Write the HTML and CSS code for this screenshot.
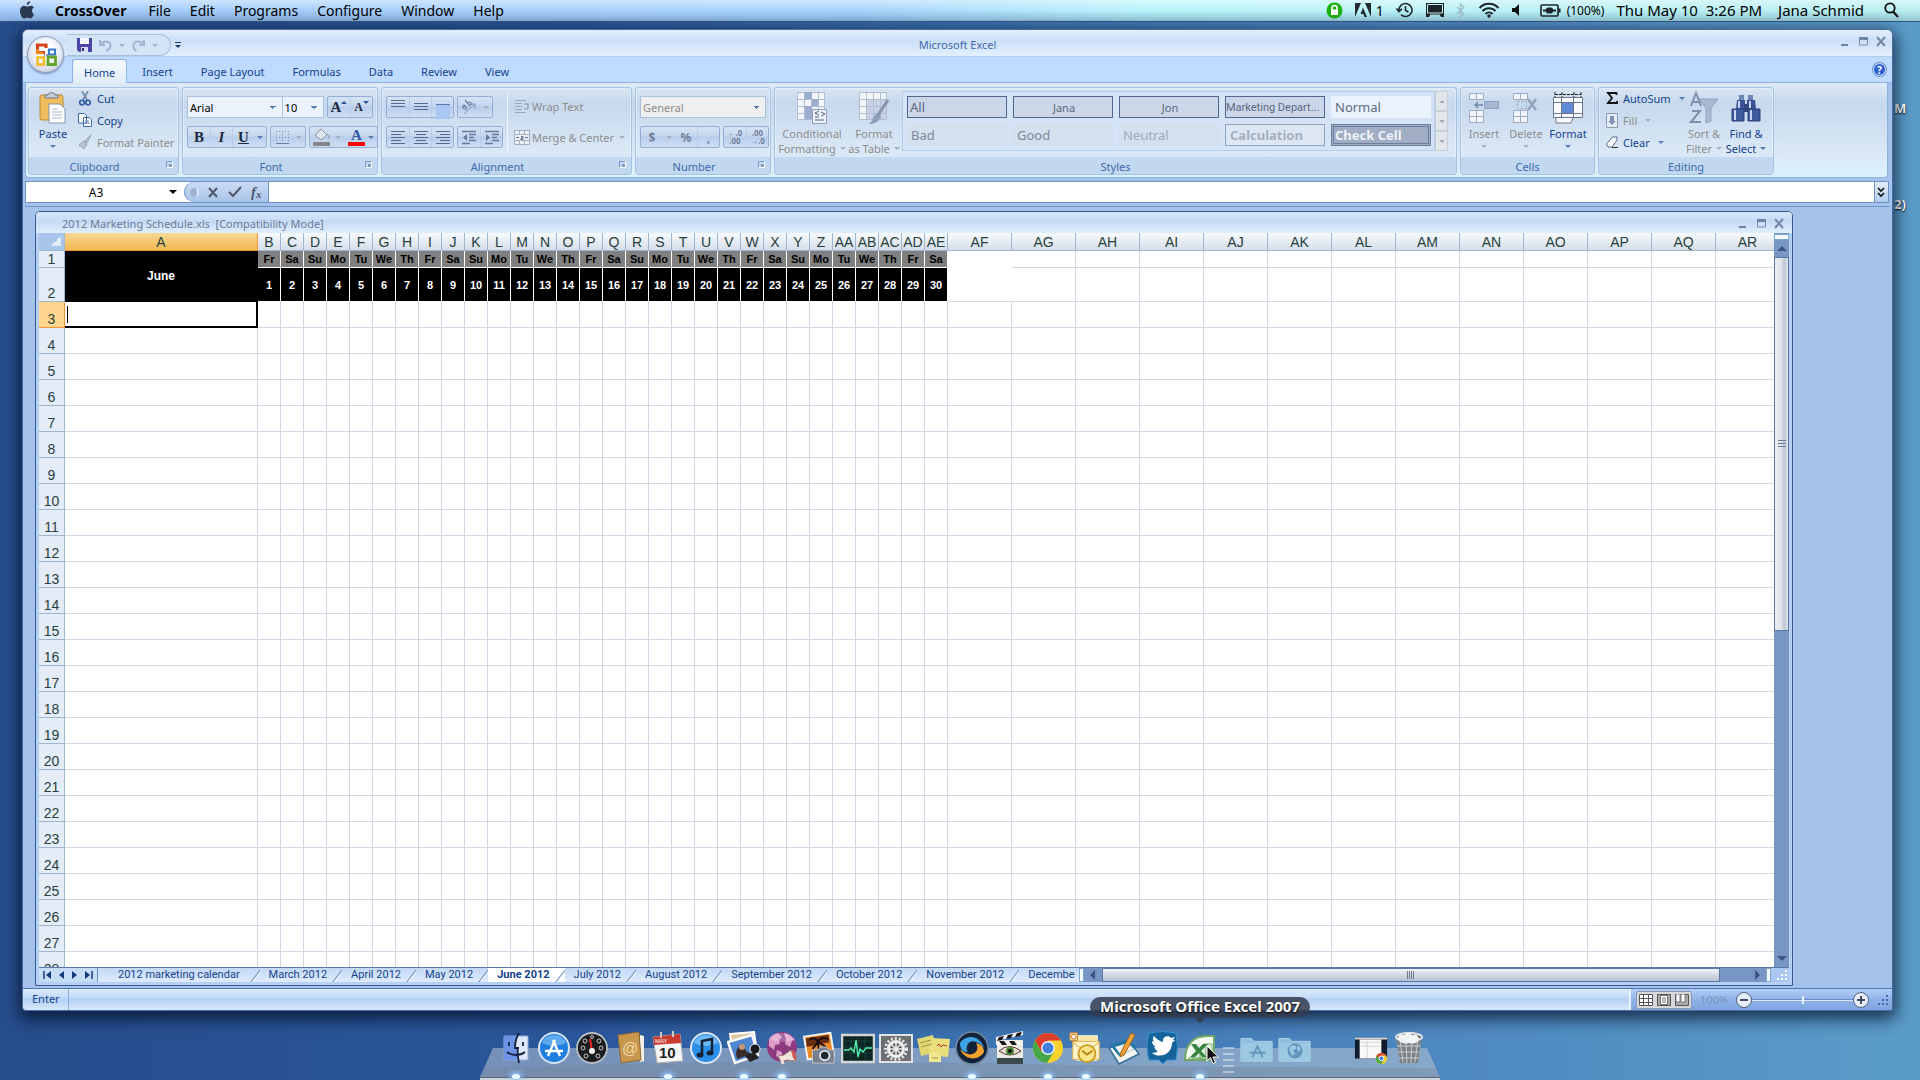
FILE: index.html
```html
<!doctype html>
<html lang="en">
<head>
    <meta charset="UTF-8">
    <title>Microsoft Excel</title>
    <link rel="stylesheet" href="styles.css">
</head>
<body>
    <header class="menubar">
        <svg class="apple" width="16" height="18" viewBox="0 0 16 18"><path d="M11 0c.2 2-1.400 3.900-3.300 4C7.500 2.300 9.200.3 11 0zM14.900 13.200C14 15.700 12.700 17.500 11.300 17.500c-1.100 0-1.500-.7-2.900-.7s-1.900.7-2.900.7C3.300 17.500 1 13.600 1 10.200 1 6.900 3 4.800 5.200 4.800c1.300 0 2.200.8 3.200.8.900 0 2-.9 3.600-.9 1.100 0 2.200.6 2.900 1.600-2.700 1.700-2.300 5.700 0 6.900z" fill="#2b3950"/></svg>
        <nav class="menus">
            <button class="app-name">CrossOver</button>
            <button>File</button>
            <button>Edit</button>
            <button>Programs</button>
            <button>Configure</button>
            <button>Window</button>
            <button>Help</button>
        </nav>
        <div class="extras">
            <svg width="17" height="17" viewBox="0 0 17 17"><circle cx="8.500" cy="8.500" r="8" fill="#1eb010"/><path d="M6 8V6a2.500 2.500 0 0 1 5 0v2" fill="none" stroke="#fff" stroke-width="1.500"/><rect x="5" y="7.500" width="7" height="5.500" fill="#fff"/></svg>
            <span class="adobe"><svg width="16" height="14" viewBox="0 0 16 14"><path d="M0 0h6L0 14zM16 0h-6l6 14zM8 4.500l4 9.500H9.500l-1.200-3H5.500z" fill="#222c30"/></svg>1</span>
            <svg width="18" height="16" viewBox="0 0 18 16"><path d="M3 8a6.500 6.500 0 1 1 2 4.700M.5 6.500L3 9.500l3-2.700M9.500 4v4.500l3 1.500" fill="none" stroke="#1c2529" stroke-width="1.600"/></svg>
            <svg width="18" height="15" viewBox="0 0 18 15"><path d="M0 0h18v14h-3l-1.500-2.500h-9L3 14H0z" fill="#1c2529"/><path d="M1.500 1.500h15v8.500h-15z" fill="#1c2529" stroke="#cdeef2"/></svg>
            <svg width="10" height="15" viewBox="0 0 10 15"><path d="M1 4l7 7-3.500 3V1L8 4l-7 7" fill="none" stroke="#9dbcc5" stroke-width="1.200"/></svg>
            <svg width="22" height="16" viewBox="0 0 22 16"><path d="M1.500 6a13 13 0 0 1 19 0M4.500 9a9 9 0 0 1 13 0M7.500 12a5 5 0 0 1 7 0" fill="none" stroke="#1c2529" stroke-width="2"/><circle cx="11" cy="14" r="1.700" fill="#1c2529"/></svg>
            <svg width="8" height="12" viewBox="0 0 8 12"><path d="M0 4h3l4-4v12L3 8H0z" fill="#111"/></svg>
            <span class="battery"><svg width="22" height="13" viewBox="0 0 22 13"><rect x="1" y="1" width="17" height="11" rx="1" fill="none" stroke="#1c2529" stroke-width="1.600"/><path d="M19.500 4.500v4M3 6.500h4M12 6.500h4" stroke="#1c2529" stroke-width="2"/><rect x="6" y="3.500" width="7" height="6" rx="2" fill="#1c2529"/></svg>(100%)</span>
            <span class="clock">Thu May 10&nbsp; 3:26 PM</span>
            <span class="user">Jana Schmid</span>
            <svg class="search" width="15" height="16" viewBox="0 0 15 16"><circle cx="6" cy="6" r="4.700" fill="none" stroke="#111" stroke-width="1.800"/><path d="M9.500 10l4.500 5" stroke="#111" stroke-width="2.200"/></svg>
        </div>
    </header>

    <main class="desktop">
        <div class="file-label first">M</div>
        <div class="file-label second">2)</div>

        <section class="window">
            <div class="titlebar">
                <button class="office" aria-label="Office Button">
                    <svg width="24" height="26" viewBox="0 0 24 26" fill="none"><path d="M11 10.500H3.500V3H12v3" stroke="#d7431b" stroke-width="3.200"/><path d="M9 11H3.500V7" stroke="#f08a24" stroke-width="2.600"/><path d="M15 7.500h6v5h-6z" stroke="#3b7cc9" stroke-width="2.200"/><path d="M3.500 15.500H10v7H3.500z" stroke="#f2b921" stroke-width="2.400"/><path d="M14 22.500h7.500V15H14z" stroke="#63a52e" stroke-width="2.800"/><path d="M12 12h2v2h-2zM10 12h1v3h-1z" fill="#8a93a8"/></svg>
                </button>
                <div class="qat">
                    <button aria-label="Save"><svg width="15" height="14" viewBox="0 0 15 14"><path d="M0 0h15v14H2l-2-2z" fill="#4b46a8"/><path d="M3 0h9v6H3z" fill="#f3f6ff"/><path d="M4 9h7v5H4z" fill="#d8dcf0"/><path d="M5 10h2v3H5z" fill="#2d2a80"/></svg></button>
                    <button class="off" aria-label="Undo"><svg width="13" height="13" viewBox="0 0 13 13"><path d="M1 1v5h5M1.500 5.500C5 1 11 2 11.500 6c.3 3-2.500 5-4.500 6" fill="none" stroke="#a3b6d2" stroke-width="2.200"/></svg></button>
                    <i class="arrow off"></i>
                    <button class="off" aria-label="Redo"><svg width="13" height="13" viewBox="0 0 13 13"><path d="M12 1v5H7M11.500 5.500C8 1 2 2 1.500 6c-.2 3 1 5 3 6" fill="none" stroke="#a3b6d2" stroke-width="2"/></svg></button>
                    <i class="arrow off"></i>
                </div>
                <button class="qat-more" aria-label="Customize"><i class="arrow"></i></button>
                <h1>Microsoft Excel</h1>
                <div class="controls">
                    <button aria-label="Minimize"><svg width="11" height="11"><path d="M1 9h7" stroke="#6d83a5" stroke-width="2"/></svg></button>
                    <button aria-label="Restore"><svg width="11" height="11"><path d="M1.500 2v7h8V2" fill="none" stroke="#7b8fae"/><path d="M1 2.500h9" stroke="#6d83a5" stroke-width="3"/></svg></button>
                    <button aria-label="Close"><svg width="11" height="11"><path d="M1 1l8 9M9 1l-8 9" stroke="#7488a8" stroke-width="2"/></svg></button>
                </div>
            </div>

            <nav class="ribbon-tabs">
                <button class="active">Home</button>
                <button>Insert</button>
                <button>Page Layout</button>
                <button>Formulas</button>
                <button>Data</button>
                <button>Review</button>
                <button>View</button>
                <button class="help" aria-label="Help">?</button>
            </nav>

            <div class="ribbon">
                <section class="group clipboard">
                    <div class="body">
                        <button class="big">
                            <svg width="28" height="32" viewBox="0 0 28 32"><rect x="1" y="3" width="23" height="25" rx="2" fill="#efbd5c" stroke="#bd8b35"/><path d="M6 6V3h3c0-3 7-3 7 0h3v3z" fill="#c6ccd6" stroke="#71788a"/><path d="M10 12h11l5 5v14H10z" fill="#fff" stroke="#8694ae"/><path d="M13 17h6M13 20h10M13 23h10M13 26h10" stroke="#a9b6cc"/></svg>
                            <span>Paste</span><i class="arrow"></i>
                        </button>
                        <div class="stack">
                            <button class="cut"><svg width="14" height="15" viewBox="0 0 14 15"><path d="M4 0l5 9M10 0L5 9" stroke="#7286a8" stroke-width="1.600"/><circle cx="4" cy="11.500" r="2.300" fill="none" stroke="#2f5aa5" stroke-width="1.600"/><circle cx="10" cy="11.500" r="2.300" fill="none" stroke="#2f5aa5" stroke-width="1.600"/></svg>Cut</button>
                            <button><svg width="14" height="14" viewBox="0 0 14 14"><path d="M.5.500h6l2 2V10h-8zM5.500 4.500h6l2 2v7h-8z" fill="#fff" stroke="#3c68ad"/><path d="M7 8h4M7 10h5" stroke="#5d83c0"/></svg>Copy</button>
                            <button class="off"><svg width="14" height="14" viewBox="0 0 14 14"><path d="M13 0L7 6l2 2zM6 6l3 3-3 5-5-4z" fill="#b7c2d2" stroke="#98a6ba"/></svg>Format Painter</button>
                        </div>
                    </div>
                    <h2 class="launcher">Clipboard<i class="launch"></i></h2>
                </section>

                <section class="group font">
                    <div class="body rows">
                        <div class="row">
                            <select class="combo face" aria-label="Font"><option>Arial</option></select>
                            <select class="combo size" aria-label="Font size"><option>10</option></select>
                            <div class="cluster last"><button class="serif">A<svg width="6" height="12"><path d="M0 3l3-3 3 3z" fill="#2d5596"/></svg></button><button class="serif small">A<svg width="6" height="12"><path d="M0 0h6L3 3z" fill="#2d5596"/></svg></button></div>
                        </div>
                        <div class="row">
                            <div class="cluster"><button class="serif">B</button><button class="serif italic">I</button><button class="serif under">U</button><i class="arrow"></i></div>
                            <div class="cluster off"><button aria-label="Borders"><svg width="15" height="15"><path d="M1.500 1v12M7.500 1v12M13.500 1v12M1 1.500h13M1 7.500h13" stroke="#7f8ea8" stroke-dasharray="1 2"/><path d="M1 13.500h13" stroke="#6d7c96"/></svg></button><i class="arrow"></i></div>
                            <div class="cluster last"><button aria-label="Fill color"><svg width="17" height="18"><path d="M2 7l6-6 6 6-6 5z" fill="#dfe5ee" stroke="#8792a8"/><path d="M14 6c3 2 2 4 1 5" stroke="#8792a8" fill="none"/><path d="M0 14h17v4H0z" fill="#858585"/></svg></button><i class="arrow off"></i><button class="font-color">A</button><i class="arrow"></i></div>
                        </div>
                    </div>
                    <h2 class="launcher">Font<i class="launch"></i></h2>
                </section>

                <section class="group alignment">
                    <div class="body">
                        <div class="rows">
                            <div class="row">
                                <div class="cluster"><button aria-label="Top"><i class="lines top"></i></button><button aria-label="Middle"><i class="lines"></i></button><button aria-label="Bottom"><i class="lines bottom"></i></button></div>
                                <div class="cluster"><button aria-label="Orientation"><svg width="18" height="18"><path d="M4 16L15 6M15 11V6h-5" fill="none" stroke="#8090ad"/><path d="M2 9q2-3 3-1l2 2M5 8q-3 2-1 3t3-1M5 2l5 6M7 5q3-2 4 0t-2 3" fill="none" stroke="#7484a2" stroke-width="1.200"/></svg></button><i class="arrow off"></i></div>
                            </div>
                            <div class="row">
                                <div class="cluster"><button aria-label="Left"><i class="lines left"></i></button><button aria-label="Center"><i class="lines center"></i></button><button aria-label="Right"><i class="lines right"></i></button></div>
                                <div class="cluster"><button aria-label="Decrease indent"><svg width="16" height="15"><path d="M1 1.500h14M8 4.500h7M8 7.500h5M8 10.500h7M1 13.500h8" stroke="#65799d" stroke-width="1.500"/><path d="M6 4L2 7.500 6 11z" fill="#65799d"/></svg></button><button aria-label="Increase indent"><svg width="16" height="15"><path d="M1 1.500h14M8 4.500h7M8 7.500h5M8 10.500h7M1 13.500h8" stroke="#65799d" stroke-width="1.500"/><path d="M2 4l4 3.500L2 11z" fill="#65799d"/></svg></button></div>
                            </div>
                        </div>
                        <div class="stack wide">
                            <button class="off"><svg width="16" height="15"><path d="M1 1.500h11M1 4.500h7M1 7.500h7M1 10.500h7M1 13.500h11" stroke="#9aa8bf"/><path d="M10 5h4v5h-4" fill="none" stroke="#8393b0"/></svg>Wrap Text</button>
                            <button class="off"><svg width="16" height="15"><path d="M.5.500h15v14H.500zM.500 4.500h15M.500 10.500h15M5.500 0v4M10.500 0v4M5.500 11v4M10.500 11v4" fill="#edf1f7" stroke="#a3afc3"/><path d="M2 7.500h3M11 7.500h3M7 6.500h2v3H7v-1.500h2" fill="none" stroke="#65728c"/></svg>Merge &amp; Center<i class="arrow"></i></button>
                        </div>
                    </div>
                    <h2 class="launcher">Alignment<i class="launch off"></i></h2>
                </section>

                <section class="group number">
                    <div class="body rows">
                        <div class="row"><select class="combo format" disabled aria-label="Number format"><option>General</option></select></div>
                        <div class="row">
                            <div class="cluster"><button class="sign">$</button><i class="arrow off"></i><button class="sign">%</button><button class="sign">,</button></div>
                            <div class="cluster last"><button class="decimal">←.0<br>.00</button><button class="decimal">.00<br>→.0</button></div>
                        </div>
                    </div>
                    <h2 class="launcher">Number<i class="launch off"></i></h2>
                </section>

                <section class="group styles">
                    <div class="body">
                        <button class="big off conditional">
                            <svg width="32" height="34" viewBox="0 0 32 34"><path d="M1.500 1.500h27v27h-27zM1 8.500h27M1 15.500h27M1 22.500h27M8.500 1v27M15.500 1v27M22.500 1v27" fill="#f2f5fa" stroke="#b0bccf"/><path d="M9 1h7v7H9zM9 15h7v13H9zM16 8h6v7h-6z" fill="#9badcf"/><path d="M16.500 18.500h14v14h-14z" fill="#edf2fa" stroke="#8ea0bd"/><path d="M23 20l-4 2 4 2M19 26h4M25 21l4 2-4 2M19 29h9" fill="none" stroke="#51627f"/></svg>
                            <span>Conditional<br>Formatting<i class="arrow"></i></span>
                        </button>
                        <button class="big off table-style">
                            <svg width="32" height="34" viewBox="0 0 32 34"><path d="M1.500 1.500h27v27h-27zM1 8.500h27M1 15.500h27M1 22.500h27M8.500 1v27M15.500 1v27M22.500 1v27" fill="#f2f5fa" stroke="#b0bccf"/><path d="M9 9h19v19H9z" fill="#b5c2d8" opacity=".7"/><path d="M30 9L20 24" stroke="#8492aa" stroke-width="3"/><path d="M19 22l4 3c-2 6-6 8-12 8 4-3 4-8 8-11z" fill="#8d9db9"/></svg>
                            <span>Format<br>as Table<i class="arrow"></i></span>
                        </button>
                        <div class="gallery">
                            <button class="boxed big-text">All</button><button class="boxed mid">Jana</button><button class="boxed mid">Jon</button><button class="boxed tight">Marketing Depart...</button><button class="normal">Normal</button>
                            <button class="bad">Bad</button><button class="good">Good</button><button class="neutral">Neutral</button><button class="calc">Calculation</button><button class="check">Check Cell</button>
                        </div>
                        <div class="gallery-scroll"><button aria-label="Up"><i class="arrow up"></i></button><button aria-label="Down"><i class="arrow"></i></button><button aria-label="More"><i class="arrow more"></i></button></div>
                    </div>
                    <h2>Styles</h2>
                </section>

                <section class="group cells">
                    <div class="body">
                        <button class="big off"><svg width="32" height="32" viewBox="0 0 32 32"><path d="M1.500 1.500h14v6h-14zM8.500 1v6M1.500 18.500h14v12h-14zM8.500 18v12M1 24.500h14" fill="#f2f5fa" stroke="#9cabc3"/><path d="M16.500 9.500h14v7h-14z" fill="#a9b8d2" stroke="#8fa0bc"/><path d="M7 13h8M10 10l-3 3 3 3" stroke="#7687a5" fill="none" stroke-width="1.500"/></svg><span>Insert</span><i class="arrow"></i></button>
                        <button class="big off"><svg width="32" height="32" viewBox="0 0 32 32"><path d="M3.500 1.500h14v6h-14zM10.500 1v6M3.500 18.500h14v12h-14zM10.500 18v12M3 24.500h14" fill="#f2f5fa" stroke="#9cabc3"/><path d="M7.500 9.500h9v7h-9z" fill="none" stroke="#8fa0bc" stroke-dasharray="2"/><path d="M18 7l8 11M26 7l-8 11" stroke="#94a2bb" stroke-width="2.500"/></svg><span>Delete</span><i class="arrow"></i></button>
                        <button class="big"><svg width="32" height="34" viewBox="0 0 32 34"><path d="M3 3.500h26M3 1v5M29 1v5M10 1v5M22 1v5" stroke="#222" stroke-dasharray="3 1"/><path d="M1.500 6.500h29v20h-29zM1 11.500h29M1 22.500h29M9.500 6v20M21.500 6v20M4 27v5h15l2-5" fill="#f8faff" stroke="#6e7685"/><path d="M10 12h11v10H10z" fill="#5e8ad8"/></svg><span>Format</span><i class="arrow"></i></button>
                    </div>
                    <h2>Cells</h2>
                </section>

                <section class="group editing">
                    <div class="body">
                        <div class="stack">
                            <button><svg width="12" height="12" viewBox="0 0 12 12"><path d="M10.500 3V1H2l4 5-4 5h9V9" fill="none" stroke="#111" stroke-width="1.800"/></svg>AutoSum<i class="arrow"></i></button>
                            <button class="off"><svg width="12" height="15"><path d="M.5.500h11v14H.500z" fill="#e6ecf5" stroke="#8c9bb4"/><path d="M4 3h4v5h2l-4 4-4-4h2z" fill="#8294b4"/></svg>Fill<i class="arrow"></i></button>
                            <button><svg width="12" height="12"><path d="M.5 8l6-7H11v3l-5 7H2z" fill="#fff" stroke="#566583"/><path d="M6 11.500h6" stroke="#333"/></svg>Clear<i class="arrow"></i></button>
                        </div>
                        <button class="big off"><svg width="30" height="34" viewBox="0 0 30 34"><path d="M10 8h19l-7 9v13l-5 2V17z" fill="#aab9d1" stroke="#92a3bf"/><path d="M2 15L7 2l5 13M4 11h6M3 20h8L2 31h10" fill="none" stroke="#7e8fae" stroke-width="2"/></svg><span>Sort &amp;<br>Filter<i class="arrow"></i></span></button>
                        <button class="big"><svg width="30" height="34" viewBox="0 0 30 34"><path d="M8 4h5v5H8zM17 4h5v5h-5z" fill="#7084b5"/><path d="M6 9h8v9H5zM16 9h8l1 9h-9z" fill="#3a5296"/><path d="M1 18h12v12H1zM17 18h12v12H17z" fill="#405a9f" stroke="#2a3f78"/><path d="M4 19v10M20 19v10M8 10v7M19 10v7" stroke="#c7d3f0" stroke-width="2"/><path d="M13 13h4v8h-4z" fill="#2f457f"/></svg><span>Find &amp;<br>Select<i class="arrow"></i></span></button>
                    </div>
                    <h2>Editing</h2>
                </section>
            </div>

            <div class="formula-bar">
                <input class="name-box" value="A3" aria-label="Name box">
                <i class="arrow black"></i>
                <div class="fx">
                    <i class="ball"></i>
                    <button aria-label="Cancel"><svg width="11" height="11"><path d="M1 1l8 9M9 1L1 10" stroke="#51586a" stroke-width="2"/></svg></button>
                    <button aria-label="Enter"><svg width="14" height="12"><path d="M1 6l4 4 8-9" fill="none" stroke="#51586a" stroke-width="2"/></svg></button>
                    <button class="fn">f<small>x</small></button>
                </div>
                <input class="formula" aria-label="Formula">
                <button class="expand" aria-label="Expand formula bar"><svg width="9" height="11"><path d="M1 1l3 3 3-3M1 6l3 3 3-3" fill="none" stroke="#111" stroke-width="1.600"/></svg></button>
            </div>

            <div class="workspace">
                <section class="book">
                    <div class="book-title">
                        <h2>2012 Marketing Schedule.xls&nbsp; [Compatibility Mode]</h2>
                        <div class="controls">
                            <button aria-label="Minimize"><svg width="11" height="11"><path d="M1 9h7" stroke="#6d83a5" stroke-width="2"/></svg></button>
                            <button aria-label="Restore"><svg width="11" height="11"><path d="M1.500 2v7h8V2" fill="none" stroke="#7b8fae"/><path d="M1 2.500h9" stroke="#6d83a5" stroke-width="3"/></svg></button>
                            <button aria-label="Close"><svg width="11" height="11"><path d="M1 1l8 9M9 1l-8 9" stroke="#7488a8" stroke-width="2"/></svg></button>
                        </div>
                    </div>
                    <div class="pane">
                        <div class="cells-view"><table id="sheet"></table></div>
                        <div class="vscroll">
                            <i class="split"></i>
                            <button aria-label="Scroll up"><i class="arrow up"></i></button>
                            <div class="thumb"><i></i></div>
                            <div class="track"></div>
                            <button aria-label="Scroll down"><i class="arrow"></i></button>
                        </div>
                    </div>
                    <div class="bottom">
                        <div class="tab-nav">
                            <button aria-label="First"><svg width="9" height="10"><path d="M1 1v8" stroke="#16387c" stroke-width="1.500"/><path d="M8 1v8L3 5z" fill="#16387c"/></svg></button>
                            <button aria-label="Previous"><svg width="9" height="10"><path d="M7 1v8L2 5z" fill="#16387c"/></svg></button>
                            <button aria-label="Next"><svg width="9" height="10"><path d="M2 1v8l5-4z" fill="#16387c"/></svg></button>
                            <button aria-label="Last"><svg width="9" height="10"><path d="M8 1v8" stroke="#16387c" stroke-width="1.500"/><path d="M1 1v8l5-4z" fill="#16387c"/></svg></button>
                        </div>
                        <div class="sheet-tabs">
                            <button class="long">2012 marketing calendar</button>
                            <button>March 2012</button>
                            <button>April 2012</button>
                            <button>May 2012</button>
                            <button class="active">June 2012</button>
                            <button>July 2012</button>
                            <button>August 2012</button>
                            <button>September 2012</button>
                            <button>October 2012</button>
                            <button>November 2012</button>
                            <button class="cut-off">Decembe</button>
                        </div>
                        <i class="split"></i>
                        <div class="hscroll">
                            <button aria-label="Scroll left"><svg width="7" height="10"><path d="M6 0v10L1 5z" fill="#3b5488"/></svg></button>
                            <div class="thumb"><i></i></div>
                            <div class="track"></div>
                            <button aria-label="Scroll right"><svg width="7" height="10"><path d="M1 0v10l5-5z" fill="#3b5488"/></svg></button>
                        </div>
                        <i class="split"></i>
                        <svg class="grip" width="12" height="12"><path d="M9 1h2v2H9zM5 5h2v2H5zM9 5h2v2H9zM1 9h2v2H1zM5 9h2v2H5zM9 9h2v2H9z" fill="#fff"/></svg>
                    </div>
                </section>
            </div>

            <footer class="status">
                <span class="mode">Enter</span>
                <div class="zoom">
                    <div class="views">
                        <button aria-label="Normal"><svg width="14" height="12"><path d="M.5.500h13v11H.500zM.500 4.500h13M.500 8.500h13M4.500 0v12M9.500 0v12" fill="#fff" stroke="#555"/></svg></button>
                        <button aria-label="Page layout"><svg width="14" height="12"><path d="M.5.500h13v11H.500z" fill="#aaa" stroke="#555"/><path d="M3.500 1.500h7v9h-7zM5 4h4M5 6h4M5 8h4" fill="#fff" stroke="#777"/></svg></button>
                        <button aria-label="Page break"><svg width="14" height="12"><path d="M.5.500h13v11H.500z" fill="#aaa" stroke="#555"/><path d="M1 0h4v8H1zM6 0h4v8H6z" fill="#fff" stroke="#777"/></svg></button>
                    </div>
                    <span class="percent">100%</span>
                    <button class="round" aria-label="Zoom out"><svg width="10" height="10"><path d="M1 5h8" stroke="#444b5c" stroke-width="2"/></svg></button>
                    <input type="range" aria-label="Zoom">
                    <button class="round" aria-label="Zoom in"><svg width="10" height="10"><path d="M1 5h8M5 1v8" stroke="#444b5c" stroke-width="2"/></svg></button>
                    <svg class="grip" width="12" height="12"><path d="M9 1h2v2H9zM5 5h2v2H5zM9 5h2v2H9zM1 9h2v2H1zM5 9h2v2H5zM9 9h2v2H9z" fill="#4569ac"/></svg>
                </div>
            </footer>
        </section>

        <nav class="dock">
            <svg class="shelf" viewBox="0 0 962 32" preserveAspectRatio="none"><path d="M13 0h936l13 29v3H0v-3z" fill="#b6c3d4" fill-opacity=".55"/><path d="M4 20q250-9 480-5t474 5l4 9H0z" fill="#75859c" fill-opacity=".4"/><path d="M0 29h962v3H0z" fill="#ccd5df"/><path d="M0 29.500h962" stroke="#5b6470"/></svg>
            <ul>
                <!-- Finder -->
                <li class="running"><svg viewBox="0 0 34 34"><path d="M5 5h24v24H5z" fill="#dfe8f8" stroke="#8fa8d8"/><path d="M5 5h14c-2 4-3 8-3 12h3l-1 12H5z" fill="#6c93e6"/><path d="M20 2c-3 5-4 10-4 15h3c-1 5 0 10 1 15M10 11v4M24 11v4M8 21c5 4 13 4 18 0" fill="none" stroke="#16233f" stroke-width="1.800"/></svg></li>
                <!-- App Store -->
                <li><svg viewBox="0 0 34 34"><circle cx="17" cy="17" r="15" fill="#1e7fe0" stroke="#d8e4f0" stroke-width="2"/><path d="M5 12a13 13 0 0 1 24 0q-12 6-24 0" fill="#8cc4fa" opacity=".6"/><path d="M11 25l7-16M23 25L16 9M8 20h18" stroke="#fff" stroke-width="2.400"/></svg></li>
                <!-- Dashboard -->
                <li><svg viewBox="0 0 34 34"><circle cx="17" cy="17" r="15" fill="#1b1c1f" stroke="#b9bdc3" stroke-width="1.800"/><g fill="none" stroke="#c6c6c6"><circle cx="10" cy="10" r="2"/><circle cx="24" cy="10" r="2"/><circle cx="26" cy="17" r="2"/><circle cx="8" cy="17" r="2"/><circle cx="17" cy="6" r="1.500"/><circle cx="11" cy="25" r="2"/><circle cx="23" cy="25" r="2"/></g><path d="M17 20l-2-12" stroke="#e22" stroke-width="2"/><circle cx="17" cy="20" r="3" fill="#eee"/></svg></li>
                <!-- Address Book -->
                <li><svg viewBox="0 0 34 34"><path d="M27 4l4 1v25l-4 1z" fill="#f3efe4"/><path d="M5 4l21-3 2 28-20 3z" fill="#c7974e" stroke="#8e6a34"/><text x="9" y="23" font-size="16" fill="#f2d9a6">@</text></svg></li>
                <!-- Calendar -->
                <li class="running"><svg viewBox="0 0 34 34"><path d="M2 6l27-3 3 27-26 2z" fill="#f5f5f5" stroke="#aaa"/><path d="M2 6l27-3 1 9-27 2z" fill="#c93a31"/><path d="M10 1v6M22 0v6" stroke="#ccc" stroke-width="2"/><text x="4" y="12" font-size="6" fill="#fff">MAY</text><text x="8" y="27" font-size="15" font-weight="bold" fill="#222">10</text></svg></li>
                <!-- iTunes -->
                <li><svg viewBox="0 0 34 34"><circle cx="17" cy="17" r="15" fill="#2a8fe8" stroke="#dde6f0" stroke-width="2"/><path d="M5 12a13 13 0 0 1 24 0q-12 6-24 0" fill="#9bd5ff" opacity=".6"/><path d="M13 24V10l10-2v13" fill="none" stroke="#162033" stroke-width="2.500"/><ellipse cx="11" cy="24" rx="3.500" ry="2.500" fill="#162033"/><ellipse cx="21" cy="22" rx="3.500" ry="2.500" fill="#162033"/></svg></li>
                <!-- Preview -->
                <li class="running"><svg viewBox="0 0 34 34"><path d="M3 3l24-2 3 20-24 4z" fill="#d9c8a0" stroke="#fff" stroke-width="2"/><path d="M1 11l24-7 6 20-23 8z" fill="#4e86cf" stroke="#f7f7f7" stroke-width="2.500"/><path d="M9 22c2-9 7-10 10-2l5 3-14 5z" fill="#3c2b2a"/><circle cx="15" cy="16" r="3" fill="#c59577"/><circle cx="28" cy="18" r="5" fill="#16181b" stroke="#eee"/><path d="M18 25l9-4 5 6-9 4z" fill="#222"/></svg></li>
                <!-- Globe with megaphone -->
                <li class="running"><svg viewBox="0 0 34 34"><circle cx="17" cy="16" r="15" fill="#8d3a80"/><path d="M4 8q3-5 9-6l4 4-3 3 1 4-5 1-1 5-5-4zM19 2q7 1 11 7l-3 1-2 6-5-3 1-5zM12 19l5 2-1 7-5-3z" fill="#dc9cc7"/><path d="M5 8q12-12 24 0-12 6-24 0" fill="#fff" opacity=".25"/><path d="M13 25l6-1 7-5 5 11-9-1-6 2z" fill="#f2e6dc" stroke="#9c7c72"/><path d="M26 19q4 0 5 5t0 6l-3-3z" fill="#d05a50"/><path d="M17 29l1 4" stroke="#efe2d8" stroke-width="3"/></svg></li>
                <!-- iPhoto -->
                <li><svg viewBox="0 0 36 34"><path d="M1 5l28-4 4 24-28 4z" fill="#ec8b26" stroke="#f6f6f2" stroke-width="2"/><path d="M3 7l24-4 1 8-24 5z" fill="#6a2d11"/><path d="M17 24l-1-14M7 8c5-3 8 0 9 3 2-5 6-6 11-3M16 11l-6 7M17 11l7 5" stroke="#160d09" stroke-width="2" fill="none"/><path d="M10 19h6l2-3h7l2 3h6v14H10z" fill="#78818d" stroke="#c0c7cf"/><circle cx="23" cy="25" r="5" fill="#202831" stroke="#dbe2e8" stroke-width="2"/></svg></li>
                <!-- Activity Monitor -->
                <li><svg viewBox="0 0 34 34"><path d="M1 4h32v27H1z" fill="#0b2623" stroke="#d4d6d6" stroke-width="2.500"/><path d="M3 10h28M3 16h28M3 22h28M10 6v23M17 6v23M24 6v23" stroke="#225048" stroke-width=".6"/><path d="M3 19h5l2-2 3 4 2-12 2 17 2-8 3 3 3-4h6" fill="none" stroke="#55f0b0" stroke-width="1.400"/></svg></li>
                <!-- System Preferences -->
                <li><svg viewBox="0 0 34 34"><path d="M1 4h32v27H1z" fill="#6d7073" stroke="#e0e2e3" stroke-width="2"/><circle cx="17" cy="18" r="9" fill="#efefef"/><circle cx="17" cy="18" r="10.500" fill="none" stroke="#e5e5e5" stroke-width="3" stroke-dasharray="2 2"/><circle cx="17" cy="18" r="6" fill="#55585b"/><path d="M17 11v14M10 18h14M12 13l10 10M22 13L12 23" stroke="#efefef" stroke-width="1.500"/></svg></li>
                <!-- Stickies -->
                <li><svg viewBox="0 0 34 34"><path d="M0 8l16-4 4 17-16 4z" fill="#e2d873"/><path d="M14 7l19 1-2 18-19-2z" fill="#eadf7b"/><path d="M12 22h12v9H12z" fill="#efe78d"/><path d="M3 12l11-3M4 16l11-3M15 27h6" stroke="#9d934a"/><path d="M20 15l2-2 2 3 2-2 4 1" fill="none" stroke="#b33"/></svg></li>
                <!-- CrossOver -->
                <li class="running"><svg viewBox="0 0 34 34"><circle cx="17" cy="17" r="16" fill="#13243a" stroke="#71869d" stroke-width="1.600"/><path d="M5 12C11 3 25 4 29 17 23 9 14 8 12 15c-1 3 0 5 1 6-5 0-8-3-8-9z" fill="#3ea4e7"/><path d="M29 21c-5 9-19 9-24-3 7 7 14 7 17 1 1-3 0-5-1-7 5 1 8 4 8 9z" fill="#f2a22e"/></svg></li>
                <!-- Final Cut -->
                <li><svg viewBox="0 0 34 34"><path d="M4 9h26v22H4z" fill="#eceae4"/><path d="M3 6l27-6v4L3 10zM3 10h27v4H3z" fill="#f2f2f2"/><path d="M6 6l5-1-2 4-5 1zM15 4l5-1-2 4-5 1zM24 2l5-1-2 4-5 1zM6 10h5l3 4H9zM16 10h5l3 4h-5z" fill="#171717"/><path d="M6 20q10-9 22 0-11 8-22 0z" fill="#eddcd0" stroke="#563a30"/><circle cx="17" cy="20" r="4" fill="#4c8a36"/><circle cx="17" cy="20" r="2" fill="#111"/><path d="M4 27h26v6H4z" fill="#3b4a4b"/></svg></li>
                <!-- Chrome -->
                <li class="running"><svg viewBox="0 0 34 34"><circle cx="17" cy="17" r="15" fill="#f9d22c"/><path d="M4 9.500A15 15 0 0 1 30 9.500H17L10.500 21z" fill="#dd3b2c"/><path d="M4 9.500A15 15 0 0 0 16 32l7-11.500-12.500.5z" fill="#45a848"/><circle cx="17" cy="17" r="7" fill="#f4f4f4"/><circle cx="17" cy="17" r="5.500" fill="#3f81dd"/></svg></li>
                <!-- Outlook -->
                <li class="running"><svg viewBox="0 0 36 34"><path d="M8 4h22v26H8z" fill="#f9e5ab" stroke="#fff6da"/><path d="M4 10h28v19H4z" fill="#fff3c9" stroke="#d9b24d"/><path d="M4 11l14 10 14-10" fill="none" stroke="#d9a42e"/><circle cx="19" cy="23" r="9" fill="#fce588" stroke="#c89a22" stroke-width="2"/><path d="M14 20l5 4 6-4" fill="none" stroke="#b58415" stroke-width="2"/><path d="M1 1h8v8H1z" fill="#fbd9a0" stroke="#d58a33"/><circle cx="5" cy="5" r="2.500" fill="#fff" stroke="#c87020"/></svg></li>
                <!-- Text editor -->
                <li><svg viewBox="0 0 34 34"><path d="M2 17l21-6 9 12-20 10z" fill="#f3f5f5" stroke="#346d94" stroke-width="1.500"/><path d="M3 14l19-6 8 9-18 8z" fill="#2277a5"/><path d="M8 16l13-4 6 6-13 6z" fill="#f3f3ea"/><path d="M24 2l4 2-11 20-4 2 1-5z" fill="#f3a23c" stroke="#9d611e"/></svg></li>
                <!-- Twitter -->
                <li><svg viewBox="0 0 34 34"><path d="M4 2q13-3 27 0 3 13 0 27h-9l-4 4-4-4H4Q0 16 4 2z" fill="#15639b" stroke="#3a93cf"/><path d="M7 22q4 0 6-2-3-1-4-4h2q-4-2-4-6l2 1q-2-4 0-6 4 5 9 6c-1-6 6-7 8-4l4-1-2 3 2 0-3 3c0 11-12 16-20 10z" fill="#fff"/></svg></li>
                <!-- Excel -->
                <li class="running hover"><svg viewBox="0 0 34 34"><path d="M2 29C2 15 9 5 24 5h7v24z" fill="#f4faf0" stroke="#70a565" stroke-width="2"/><path d="M21 13h8v15H10v-5" fill="#dfeedd" stroke="#78b06e"/><path d="M8 13h5l3 4 4-4h5l-7 7 6 6h-5l-3-4-4 4H7l6-6z" fill="#348341"/><path d="M5 27h24M17 23v6M23 15v12" stroke="#65a55f"/></svg><span class="tooltip">Microsoft Office Excel 2007</span></li>
                <li class="divider"></li>
                <!-- Applications folder -->
                <li><svg viewBox="0 0 36 34"><path d="M1 7h11l3 3h19v21H1z" fill="#8fbfdc" stroke="#b5d6e8"/><path d="M1 12h33v19H1z" fill="#9cc8e2"/><path d="M13 27l6-13M24 27l-6-13M10 22h17" stroke="#6398bc" stroke-width="2"/></svg></li>
                <!-- Sites folder -->
                <li><svg viewBox="0 0 36 34"><path d="M1 7h11l3 3h19v21H1z" fill="#8fbfdc" stroke="#b5d6e8"/><path d="M1 12h33v19H1z" fill="#9cc8e2"/><circle cx="18" cy="20" r="8" fill="#6398bc"/><path d="M13 15l5-1 2 3-4 3 2 4-3 1-3-6zM21 14l3 3-1 4-3-2z" fill="#9cc8e2"/></svg></li>
                <!-- Minimised window -->
                <li class="minimised"><svg viewBox="0 0 36 34"><path d="M1 6h34v22H1z" fill="#101b2c"/><path d="M1 6h34v2H1z" fill="#d3d8df"/><path d="M6 8h23v20H6z" fill="#f8f8f8"/><path d="M7 11h21M7 15h21M14 10v17" stroke="#d0d2d6"/><circle cx="29" cy="28" r="6" fill="#f6cf34"/><path d="M24 25a6 6 0 0 1 10 0h-5l-3 5z" fill="#dc4131"/><path d="M24 25a6 6 0 0 0 5 9l3-5h-5z" fill="#43a648"/><circle cx="29" cy="28" r="2.500" fill="#397dd8" stroke="#fff"/></svg></li>
                <!-- Trash -->
                <li><svg viewBox="0 0 34 34"><path d="M4 7h26l-4 25H8z" fill="#7d8287"/><path d="M8 9l3 22M14 9l1 23M20 9l-1 23M26 9l-3 22M5 15h24M6 21h22M7 27h20" stroke="#c9cdd1"/><ellipse cx="17" cy="6" rx="13" ry="4" fill="#51565b" stroke="#e2e5e8" stroke-width="2"/><path d="M6 8q0-6 6-4 4-5 8 0 6-2 7 4-2 6-10 4-8 2-11-4z" fill="#f1f3f4"/></svg></li>
            </ul>
            <svg class="cursor" width="14" height="20" viewBox="0 0 14 20"><path d="M1 1v15l3.500-3.500L7 18.500l2.500-1L7 12h5.500z" fill="#111" stroke="#fff"/></svg>
        </nav>
    </main>
    <script src="sheet.js"></script>
</body>
</html>
```
FILE: styles.css
```css
* {
    box-sizing: border-box;
}
body {
    margin: 0;
    height: 100vh;
    display: flex;
    flex-direction: column;
    overflow: hidden;
    font-family: "Noto Sans", "Open Sans", sans-serif;
    font-size: 11px;
    color: #15428b;
    background: linear-gradient(90deg, #264d8c 0%, #2a579b 30%, #3d74b2 52%, #4e88c0 75%, #5a9cc8 100%);
}
h1, h2, ul {
    margin: 0;
    padding: 0;
    font-size: 11px;
    font-weight: normal;
}
button, input, select {
    margin: 0;
    padding: 0;
    border: none;
    background: none;
    font: inherit;
    color: inherit;
    outline: none;
}
button {
    display: flex;
    align-items: center;
    justify-content: center;
    white-space: nowrap;
}
svg {
    flex: none;
    display: block;
}
.arrow {
    flex: none;
    width: 0;
    height: 0;
    border: 3px solid transparent;
    border-top-color: #567db1;
    border-bottom: none;
}
.arrow.up {
    border: 3px solid transparent;
    border-bottom-color: #3b5488;
    border-top: none;
}
.off .arrow, .arrow.off {
    border-top-color: #a3b0c4;
}

/* mac menu bar */
.menubar {
    flex: none;
    height: 22px;
    display: flex;
    align-items: center;
    padding: 0 21px 1px 19px;
    font-size: 14px;
    color: #000;
    background: linear-gradient(rgba(255, 255, 255, .45), rgba(255, 255, 255, 0) 50%, rgba(60, 100, 150, .3)), linear-gradient(90deg, #a4cbfa, #a9d4fb 45%, #b9f4fa 60%, #b9eef0);
    border-bottom: 1px solid #35567f;
}
.menus {
    display: flex;
    gap: 19px;
    margin-left: 20px;
}
.menus .app-name {
    font-weight: bold;
    margin-right: 3px;
}
.extras {
    display: flex;
    align-items: center;
    gap: 12px;
    margin-left: auto;
    white-space: nowrap;
}
.adobe, .battery {
    display: flex;
    align-items: center;
    gap: 5px;
}
.battery {
    margin-left: 8px;
    font-size: 12px;
}
.clock, .user {
    font-size: 15px;
}
.user {
    margin: 0 8px 0 4px;
}

.desktop {
    position: relative;
    flex: 1;
    min-height: 0;
    display: flex;
    flex-direction: column;
    padding-top: 7px;
}
.file-label {
    position: absolute;
    left: 1894px;
    color: #fff;
    font-size: 13px;
    font-weight: bold;
    text-shadow: 0 1px 2px #000;
}
.file-label.first {
    top: 77px;
}
.file-label.second {
    top: 173px;
}

/* excel window */
.window {
    position: relative;
    flex: 1;
    min-height: 0;
    margin: 0 27px 0 22px;
    display: flex;
    flex-direction: column;
    background: #a5c2ea;
    border: 1px solid #4a6fa8;
    border-radius: 6px 6px 4px 4px;
    box-shadow: 0 5px 16px 3px rgba(0, 10, 30, .7);
}
.titlebar {
    position: relative;
    flex: none;
    height: 27px;
    display: flex;
    align-items: center;
    background: linear-gradient(#e4effd, #cbdff7 40%, #d4e4fb 60%, #e3f0fe);
    border-bottom: 1px solid #b0cfea;
    border-radius: 5px 5px 0 0;
}
.office {
    position: absolute;
    left: 4px;
    top: 6px;
    z-index: 2;
    width: 37px;
    height: 37px;
    border-radius: 50%;
    border: 1px solid #8e9cb4;
    background: radial-gradient(circle at 50% 40%, #fff 30%, #dfe4ef 60%, #b4bdd0);
    box-shadow: 0 1px 2px rgba(60, 80, 120, .6);
}
.qat {
    height: 22px;
    margin: 4px 0 0 44px;
    padding: 0 12px 0 10px;
    display: flex;
    align-items: center;
    gap: 7px;
    border: 1px solid #a8c0e0;
    border-left: none;
    border-radius: 0 11px 11px 0;
    background: #d5e3f6;
}
.qat-more {
    margin-left: 4px;
    padding-top: 6px;
}
.qat-more .arrow {
    border-top-color: #1c3a70;
    position: relative;
}
.qat-more .arrow::before {
    content: "";
    position: absolute;
    left: -3px;
    top: -6px;
    width: 6px;
    height: 1px;
    background: #1c3a70;
}
.titlebar h1 {
    position: absolute;
    left: 0;
    right: 0;
    padding-top: 2px;
    text-align: center;
    color: #3e6aaa;
    pointer-events: none;
}
.controls {
    margin-left: auto;
    display: flex;
    gap: 7px;
    padding-right: 7px;
}
.titlebar .controls {
    padding: 0 5px 3px 0;
}
.ribbon-tabs {
    flex: none;
    height: 26px;
    display: flex;
    align-items: flex-end;
    padding: 0 6px 0 49px;
    background: #bfdbff;
    border-bottom: 1px solid #8db2e3;
}
.ribbon-tabs button {
    height: 23px;
    padding: 2px 14px 0;
}
.ribbon-tabs .active {
    padding: 2px 11px 0;
    margin: 0 1px -1px 0;
    height: 24px;
    background: linear-gradient(#f4f9ff, #e1ecf8);
    border: 1px solid #8db2e3;
    border-bottom: none;
    border-radius: 3px 3px 0 0;
}
.ribbon-tabs .help {
    align-self: center;
    margin-left: auto;
    padding: 0;
    width: 13px;
    height: 13px;
    border-radius: 50%;
    background: #2b5fd0;
    border: 1px solid #dfe9ff;
    box-shadow: 0 0 0 1px #6d8fcf;
    color: #fff;
    font-weight: bold;
    font-size: 10px;
}

/* ribbon */
.ribbon {
    flex: none;
    display: flex;
    gap: 3px;
    height: 95px;
    margin: 0 4px 0 2px;
    padding: 4px 2px 2px;
    border: 1px solid #8db2e3;
    border-top: none;
    border-radius: 0 0 4px 4px;
    background: linear-gradient(#dfeaf6, #cbdcef 17%, #c7d8ed 20%, #dceaf7 80%, #d9f3fd);
}
.group {
    flex: none;
    display: flex;
    flex-direction: column;
    border: 1px solid #a5c3e2;
    border-radius: 3px;
    box-shadow: inset 0 0 0 1px rgba(255, 255, 255, .35);
}
.group h2 {
    position: relative;
    flex: none;
    height: 17px;
    line-height: 19px;
    text-align: center;
    color: #3e6aaa;
    background: #c1d8f0;
}
.group .launcher {
    padding-right: 18px;
}
.group .body {
    flex: 1;
    display: flex;
    min-height: 0;
}
.clipboard { width: 151px; }
.font { width: 196px; }
.alignment { width: 251px; }
.number { width: 136px; }
.styles { width: 683px; }
.cells { width: 135px; }
.editing { width: 176px; }
.launch {
    position: absolute;
    right: 5px;
    top: 4px;
    width: 7px;
    height: 7px;
    border: 1px solid #7d9cc8;
    border-right-color: #fff;
    border-bottom-color: #fff;
}
.launch::after {
    content: "";
    position: absolute;
    right: 0;
    bottom: 0;
    width: 3px;
    height: 3px;
    background: #7d9cc8;
}
.group button.off {
    color: #8d8d8d;
}
.big {
    flex-direction: column;
    justify-content: flex-start;
    min-width: 42px;
    padding-top: 3px;
    line-height: 15px;
}
.big svg {
    height: 34px;
    margin-bottom: 1px;
}
.big > .arrow {
    margin-top: 4px;
}
.big span {
    display: block;
    text-align: center;
}
.big span .arrow {
    display: inline-block;
    vertical-align: 3px;
    margin-left: 4px;
}
.clipboard .body {
    padding-left: 3px;
}
.stack {
    display: flex;
    flex-direction: column;
    align-items: flex-start;
    margin-top: -1px;
}
.stack button {
    height: 22px;
    gap: 5px;
}
.clipboard .stack {
    margin-left: 4px;
}
.rows {
    display: flex;
    flex-direction: column;
}
.group .rows {
    flex-direction: column;
    gap: 8px;
    padding: 8px 4px 0;
}
.row {
    display: flex;
    gap: 3px;
}
.combo {
    appearance: none;
    height: 22px;
    padding-left: 2px;
    color: #000;
    border: 1px solid #abc1de;
    background: conic-gradient(from -45deg at 50% 100%, #567db1 90deg, transparent 0) right 6px top 9px / 6px 3px no-repeat, #eaf2fb;
}
.combo.face {
    width: 97px;
    margin-right: -4px;
}
.combo.size {
    width: 43px;
}
.combo.format {
    width: 128px;
    color: #8d8d8d;
    opacity: 1;
    background-color: #efefef;
}
.cluster {
    display: flex;
    align-items: center;
    height: 22px;
    border: 1px solid #94afd6;
    border-radius: 2px;
    background: linear-gradient(#d6e3f4, #c5d7ee 45%, #b8cdeb 50%, #cfdff3);
}
.cluster.last {
    margin-left: auto;
}
.cluster button {
    width: 22px;
    height: 20px;
}
.cluster button + button {
    border-left: 1px solid #bacde8;
}
.cluster > .arrow {
    margin: 0 3px;
}
.serif {
    font-family: "Liberation Serif", serif;
    font-weight: bold;
    font-size: 15px;
    color: #1e2a3c;
}
.serif.small {
    font-size: 12px;
}
.italic {
    font-style: italic;
}
.under {
    text-decoration: underline;
}
.cluster .font-color {
    width: 17px;
    height: 18px;
    margin-left: 4px;
    font-family: "Liberation Serif", serif;
    font-weight: bold;
    font-size: 15px;
    line-height: 14px;
    color: #31589c;
    border-bottom: 4px solid #f00;
}
.lines {
    width: 14px;
    height: 8px;
    background: repeating-linear-gradient(#56698f 0 1px, transparent 1px 3px);
}
.lines.top {
    margin-bottom: 6px;
}
.lines.bottom {
    margin-top: 8px;
}
.lines.left, .lines.center, .lines.right {
    height: 13px;
    background: repeating-linear-gradient(#56698f 0 1px, transparent 1px 6px), repeating-linear-gradient(transparent 0 3px, #56698f 3px 4px, transparent 4px 6px) left / 10px 100% no-repeat;
}
.lines.center {
    background-position: 0, center;
}
.lines.right {
    background-position: 0, right;
}
.wide {
    margin: 6px 0 0;
    padding-left: 6px;
    gap: 6px;
    border-left: 1px solid #eef5fd;
}
.alignment .stack {
    height: 58px;
}
.alignment .stack button {
    height: 25px;
    gap: 2px;
}
.alignment .stack .arrow, .editing .stack .arrow {
    margin-left: 3px;
}
.sign {
    font-size: 12px;
    font-weight: bold;
    color: #71809b;
}
.decimal {
    font-size: 8px;
    line-height: 8px;
    font-weight: bold;
    color: #71809b;
}
.styles .body {
    padding-left: 3px;
}
.conditional {
    width: 68px;
}
.table-style {
    width: 56px;
}
.gallery {
    display: grid;
    grid-template-columns: repeat(5, 100px);
    grid-auto-rows: 22px;
    gap: 6px;
    padding: 4px 3px 3px 4px;
    margin: 3px 0 6px 0;
    height: 60px;
    border: 1px solid #b4cde9;
    background: #d4e4f6;
}
.gallery button {
    justify-content: flex-start;
    padding-left: 4px;
    font-size: 13px;
    color: #7b8698;
    background: #d5e0ee;
    overflow: hidden;
}
.gallery .boxed {
    border: 1px solid #50668f;
    background: #cbd6e8;
    color: #5b6982;
    padding-left: 2px;
}
.gallery .mid {
    justify-content: center;
    font-size: 11px;
}
.gallery .tight {
    font-family: Roboto, sans-serif;
    font-size: 11px;
    padding: 0;
}
.gallery .normal {
    background: #e9f2fd;
    color: #5f6b80;
}
.gallery .neutral {
    color: #9ea9b9;
}
.gallery .calc {
    font-weight: bold;
    border: 1px solid #93a4c0;
    color: #a5afbf;
    background: #dde7f4;
}
.gallery .check {
    font-weight: bold;
    border: 3px double #6b7f9f;
    background: #a1adc2;
    color: #eef3fa;
    padding-left: 1px;
}
.gallery-scroll {
    margin-top: 3px;
    height: 60px;
    display: flex;
    flex-direction: column;
}
.gallery-scroll button {
    flex: 1;
    width: 13px;
    border: 1px solid #c5cfda;
    background: #e3e7eb;
}
.gallery-scroll .arrow {
    border-top-color: #a3adba;
    border-bottom-color: #a3adba;
}
.cells .body {
    padding-left: 2px;
}
.editing .body {
    padding-left: 7px;
}
.editing .stack {
    width: 77px;
}

/* formula bar */
.formula-bar {
    flex: none;
    display: flex;
    align-items: center;
    height: 22px;
    margin: 3px 3px 0 2px;
    background: #fff;
    border: 1px solid #6b93c4;
    color: #000;
}
.name-box {
    width: 140px;
    text-align: center;
    font-size: 12px;
}
.arrow.black {
    border-width: 4px;
    border-bottom: none;
    border-top-color: #000;
    margin: 0 7px 0 3px;
}
.fx {
    display: flex;
    align-items: center;
    gap: 9px;
    width: 85px;
    height: 20px;
    padding-left: 6px;
    border-right: 1px solid #6b93c4;
    border-radius: 10px 0 0 10px;
    background: linear-gradient(#cbdcf2, #a9c4ea);
    box-shadow: inset 1px 0 0 #7d9fca;
}
.ball {
    width: 9px;
    height: 9px;
    border-radius: 50%;
    background: #9db3d2;
    border-right: 2px solid #e3ecf8;
}
.fn {
    font: italic bold 15px "Liberation Serif", serif;
    color: #51586a;
}
.fn small {
    font-size: 11px;
    padding-top: 4px;
}
.formula {
    flex: 1;
}
.expand {
    width: 14px;
    height: 20px;
    border-left: 1px solid #6b93c4;
    background: linear-gradient(#e2edfb, #b1cbee);
}

/* workbook */
.workspace {
    flex: 1;
    min-height: 0;
    display: flex;
    margin: 3px 3px 0 2px;
    padding: 4px 96px 2px 10px;
    border-top: 1px solid #6b93c4;
}
.book {
    flex: 1;
    min-width: 0;
    display: flex;
    flex-direction: column;
    padding: 0 3px 3px 3px;
    border: 1px solid #36598f;
    border-radius: 5px 5px 0 0;
    background: #b5d0f3;
}
.book-title {
    flex: none;
    height: 21px;
    margin: 0 -3px;
    display: flex;
    align-items: center;
    padding: 2px 0 0 26px;
    border-radius: 4px 4px 0 0;
    background: linear-gradient(#d9e8fb, #c5daf5 45%, #e0eefe);
    color: #6b7b94;
}
.pane {
    flex: 1;
    min-height: 0;
    display: flex;
}
.cells-view {
    flex: 1;
    min-width: 0;
    overflow: hidden;
    background: #fff;
}
#sheet {
    width: 1741px;
    table-layout: fixed;
    border-collapse: separate;
    border-spacing: 0;
    font-family: "Liberation Sans", sans-serif;
    font-size: 12px;
    line-height: 14px;
}
#sheet .col-head { width: 26px; }
#sheet .col-a { width: 193px; }
#sheet .col-day { width: 23px; }
#sheet .col-wide { width: 64px; }
#sheet tr { height: 26px; }
#sheet tr.letters { height: 18px; }
#sheet tr.days { height: 17px; }
#sheet tr.dates { height: 34px; }
#sheet th, #sheet td {
    padding: 0;
    border-right: 1px solid #d0d7e5;
    border-bottom: 1px solid #d0d7e5;
    text-align: center;
    white-space: nowrap;
    overflow: hidden;
}
#sheet th {
    font-weight: normal;
    font-size: 14px;
    color: #27413e;
    border-color: #9eb6ce;
}
#sheet .letters th {
    background: linear-gradient(#f8fbfd, #d5dde9);
}
#sheet .letters .corner {
    background: linear-gradient(135deg, transparent 50%, #e3ecf8 50%) 12px 3px / 10px 10px no-repeat, #a9c4e9;
}
#sheet .letters .on {
    background: linear-gradient(#f8d795, #f1b950);
    border-color: #f29536;
}
#sheet th.row {
    display: table-cell;
    vertical-align: bottom;
    padding-bottom: 1px;
    background: #e4ecf7;
}
#sheet th.row.on {
    background: #ffd58d;
    border-color: #f29536;
}
#sheet .month {
    background: #000;
    color: #fff;
    font-weight: bold;
    border-color: #000;
    padding-bottom: 1px;
}
#sheet .day, #sheet .date {
    font-weight: bold;
    font-size: 11px;
    border-color: #fff;
}
#sheet .day {
    background: #808080;
    color: #000;
}
#sheet .date {
    background: #000;
    color: #fff;
}
#sheet .blank {
    border-right-color: #fff;
}
#sheet .edit {
    border-right: 2px solid #000;
    border-bottom: 2px solid #000;
}
.edit input {
    display: block;
    width: 180px;
    height: 17px;
    margin: 0 0 0 2px;
    border-left: 1px solid #000;
}
.split {
    flex: none;
    border: 1px solid #7fa6cf;
    background: #f3fbff;
}
.vscroll {
    flex: none;
    width: 15px;
    display: flex;
    flex-direction: column;
    background: #7796c4;
}
.vscroll .split {
    height: 6px;
    margin-top: 1px;
}
.vscroll button {
    height: 17px;
}
.vscroll .arrow {
    border-width: 5px;
    border-top-color: #3b5488;
}
.vscroll .arrow:not(.up) {
    border-bottom: none;
}
.vscroll .arrow.up {
    border-top: none;
}
.thumb {
    display: flex;
    align-items: center;
    justify-content: center;
    border: 1px solid #5b76a8;
}
.vscroll .thumb {
    flex: 374;
    background: linear-gradient(90deg, #eef1f5, #dde3ea 50%, #bcc6d3 70%, #dfe5ee);
}
.vscroll .track {
    flex: 320;
}
.thumb i {
    width: 8px;
    height: 8px;
    background: repeating-linear-gradient(#6c7a90 0 1px, transparent 1px 3px);
}
.bottom {
    flex: none;
    height: 15px;
    display: flex;
    align-items: stretch;
    background: #a9c7f0;
    border-top: 1px solid #5b76a8;
}
.tab-nav {
    width: 58px;
    display: flex;
    justify-content: space-evenly;
    background: #c7dcf7;
}
.sheet-tabs {
    flex: 983;
    min-width: 0;
    display: flex;
    overflow: hidden;
    border-left: 1px solid #6d8fc4;
    background: #c6dcf8;
    font-family: Roboto, "Liberation Sans", sans-serif;
}
.sheet-tabs button {
    position: relative;
    flex: none;
    padding: 0 15px 0 9px;
    line-height: 14px;
    background: linear-gradient(#c3d9f6, #deebfb);
}
.sheet-tabs button::after {
    content: "";
    position: absolute;
    right: 4px;
    top: -1px;
    width: 1px;
    height: 18px;
    background: #6d8fc4;
    box-shadow: 1px 0 0 #fff;
    transform: rotate(38deg);
}
.sheet-tabs .long {
    padding: 0 20px;
}
.sheet-tabs .active {
    background: #fff;
    font-weight: bold;
}
.sheet-tabs .cut-off {
    flex: 1;
    justify-content: flex-start;
    padding-right: 0;
}
.sheet-tabs .cut-off::after {
    display: none;
}
.bottom .split {
    width: 5px;
}
.hscroll {
    flex: 684;
    min-width: 0;
    display: flex;
    background: #7796c4;
}
.hscroll button {
    width: 18px;
}
.hscroll .thumb {
    flex: 617;
    background: linear-gradient(#f2f4f8, #d4dae4 50%, #b7c1d0);
}
.hscroll .track {
    flex: 28;
}
.hscroll .thumb i {
    background: repeating-linear-gradient(90deg, #6c7a90 0 1px, transparent 1px 2px);
}
.bottom .grip {
    margin: 1px 1px 0 5px;
}

/* status bar */
.status {
    flex: none;
    height: 22px;
    display: flex;
    align-items: stretch;
    border-top: 1px solid #4f76b4;
    border-radius: 0 0 4px 4px;
    background: linear-gradient(#dcebfd, #c3dbf9 40%, #b5d0f5 50%, #d8e8fb);
}
.mode {
    width: 46px;
    padding-left: 9px;
    line-height: 20px;
    border-right: 1px solid #8fb0de;
}
.zoom {
    margin-left: auto;
    width: 263px;
    display: flex;
    align-items: center;
    padding: 0 3px 0 5px;
    border-left: 2px solid #e9f3ff;
    background: linear-gradient(#b3cff7, #8fb2e8 50%, #7fa5df);
}
.views {
    display: flex;
    width: 56px;
    height: 18px;
    border: 1px solid #8c98ab;
    border-radius: 2px;
    background: #d5d8dd;
}
.views button {
    flex: 1;
}
.percent {
    width: 44px;
    text-align: center;
    color: #7a93ba;
}
.round {
    flex: none;
    width: 16px;
    height: 16px;
    border: 1px solid #51627f;
    border-radius: 50%;
    background: #e7eef9;
}
.zoom input {
    appearance: none;
    flex: 1;
    min-width: 0;
    height: 8px;
    background: linear-gradient(#6a8cc6 0 1px, #dce8fa 1px 2px) 0 3px / 100% 2px no-repeat;
}
.zoom input::-webkit-slider-thumb {
    appearance: none;
    width: 2px;
    height: 8px;
    background: #e9f1fc;
}
.status .grip {
    margin-left: 8px;
}

/* dock */
.dock {
    position: relative;
    flex: none;
    height: 69px;
}
.shelf {
    position: absolute;
    left: 25%;
    width: 50%;
    bottom: 0;
    height: 32px;
}
.dock ul {
    position: relative;
    display: flex;
    justify-content: center;
    padding-top: 20px;
    margin-left: 5px;
    list-style: none;
    font-family: "Liberation Sans", sans-serif;
}
.dock li {
    position: relative;
    width: 38px;
    height: 49px;
    padding: 0 2px;
}
.dock li > svg {
    width: 34px;
    height: 34px;
}
.dock .running::after {
    content: "";
    position: absolute;
    left: 15px;
    bottom: 1px;
    width: 8px;
    height: 5px;
    border-radius: 50%;
    background: #eafcff;
    box-shadow: 0 0 5px 2px #92c8ff;
}
.dock .divider {
    width: 19px;
    padding: 16px 4px 0;
}
.dock .divider::before {
    content: "";
    display: block;
    height: 28px;
    background: repeating-linear-gradient(rgba(230, 238, 246, .5) 0 2px, transparent 2px 6px);
}
.dock .minimised {
    margin-left: 38px;
}
.tooltip {
    position: absolute;
    left: 50%;
    bottom: 63px;
    transform: translateX(-50%);
    padding: 0 10px;
    height: 20px;
    border-radius: 10px;
    background: rgba(50, 60, 78, .85);
    color: #fff;
    font: bold 15px/19px "Noto Sans", sans-serif;
    white-space: nowrap;
    text-shadow: 0 1px 2px #000;
}
.tooltip::after {
    content: "";
    position: absolute;
    left: 50%;
    top: 20px;
    margin-left: -6px;
    border: 6px solid transparent;
    border-top-color: rgba(50, 60, 78, .85);
    border-bottom: none;
}
.cursor {
    position: absolute;
    left: 1206px;
    top: 34px;
}
```
FILE: sheet.js
```js
var table = document.getElementById("sheet");
var days = ["Fr", "Sa", "Su", "Mo", "Tu", "We", "Th"];
var COLS = 44;

function letter(n) {
    var a = n > 25 ? "A" : "";
    return a + String.fromCharCode(65 + n % 26);
}

// column widths: row header, A, 30 days, the rest
var html = "<colgroup><col class='col-head'><col class='col-a'>";
for (var c = 1; c < COLS; c++) {
    html += "<col class='" + (c <= 30 ? "col-day" : "col-wide") + "'>";
}
html += "</colgroup><tr class='letters'><th class='corner'></th>";
for (c = 0; c < COLS; c++) {
    html += "<th" + (c == 0 ? " class='on'" : "") + ">" + letter(c) + "</th>";
}
html += "</tr>";

for (var r = 1; r <= 28; r++) {
    var cls = r == 1 ? "days" : r == 2 ? "dates" : "";
    html += "<tr class='" + cls + "'><th class='row" + (r == 3 ? " on" : "") + "'>" + r + "</th>";
    for (c = 0; c < COLS; c++) {
        if (c == 0 && r == 1) html += "<td class='month' rowspan='2'>June</td>";
        else if (c == 0 && r == 2) continue;
        else if (c == 0 && r == 3) html += "<td class='edit'><input aria-label='A3'></td>";
        else if (c <= 30 && r == 1) html += "<td class='day'>" + days[(c - 1) % 7] + "</td>";
        else if (c <= 30 && r == 2) html += "<td class='date'>" + c + "</td>";
        else if (c == 31 && r == 1) html += "<td class='blank' rowspan='2'></td>";
        else if (c == 31 && r == 2) continue;
        else html += "<td></td>";
    }
    html += "</tr>";
}
table.innerHTML = html;
```
